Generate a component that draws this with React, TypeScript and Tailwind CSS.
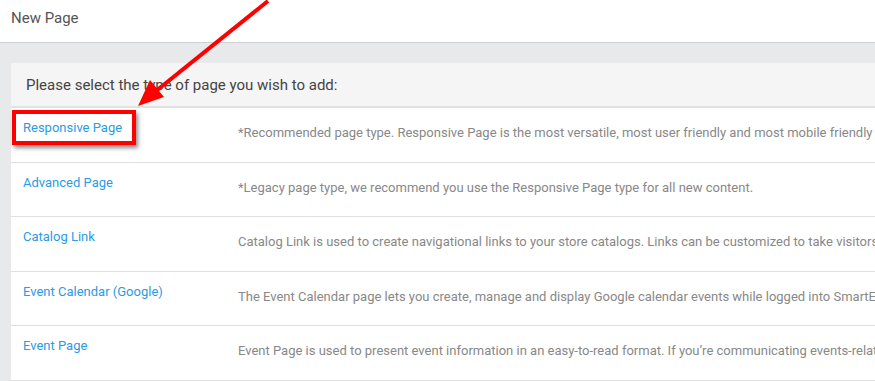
const rows = [
  {
    name: 'Responsive Page',
    desc: '*Recommended page type. Responsive Page is the most versatile, most user friendly and most mobile friendly page type available.',
  },
  {
    name: 'Advanced Page',
    desc: '*Legacy page type, we recommend you use the Responsive Page type for all new content.',
  },
  {
    name: 'Catalog Link',
    desc: 'Catalog Link is used to create navigational links to your store catalogs. Links can be customized to take visitors directly to a category.',
  },
  {
    name: 'Event Calendar (Google)',
    desc: 'The Event Calendar page lets you create, manage and display Google calendar events while logged into SmartEtailing.',
  },
  {
    name: 'Event Page',
    desc: "Event Page is used to present event information in an easy-to-read format. If you\u2019re communicating events-related content to your visitors.",
  },
];

export default function App() {
  return (
    <div className="relative w-[875px] h-[381px] overflow-hidden bg-[#e8e9eb] font-['Roboto',sans-serif]">
      {/* top bar */}
      <div className="h-[43px] bg-white border-b border-[#cfd0d3] pl-[11px] pt-[8px]">
        <h1 className="text-[15px] leading-[20px] text-[#555]">New Page</h1>
      </div>

      <div className="pl-[11px] pt-[20px]">
        <div className="w-[900px] rounded-t-[3px] bg-white">
          <div className="h-[45px] bg-[#f5f5f5] border-b-2 border-[#e2e2e2] rounded-t-[3px] pl-[15px] pt-[12px]">
            <p className="text-[15px] leading-[20px] text-[#444]">Please select the type of page you wish to add:</p>
          </div>
          {rows.map((r) => (
            <div
              key={r.name}
              className="flex h-[54.6px] border-b border-[#e0e0e0] leading-[18px]"
            >
              <div className="w-[227px] shrink-0 pl-[12px] pt-[11px] text-[13px]">
                <a className="text-[#2b9be2] cursor-pointer">{r.name}</a>
              </div>
              <div className="pt-[16px] whitespace-nowrap text-[13px] text-[#888]">{r.desc}</div>
            </div>
          ))}
        </div>
      </div>

      {/* annotation: red highlight box */}
      <div className="absolute left-[12px] top-[110px] w-[124px] h-[35px] border-4 border-[#ff0000] shadow-[2px_3px_4px_rgba(0,0,0,0.45)]" />

      {/* annotation: arrow */}
      <svg className="absolute left-0 top-0" width="875" height="381" viewBox="0 0 875 381">
        <line x1="268" y1="1" x2="156" y2="91" stroke="#ff0000" strokeWidth="4" />
        <polygon points="138,106 150,80 164,97" fill="#ff0000" />
      </svg>
    </div>
  );
}
